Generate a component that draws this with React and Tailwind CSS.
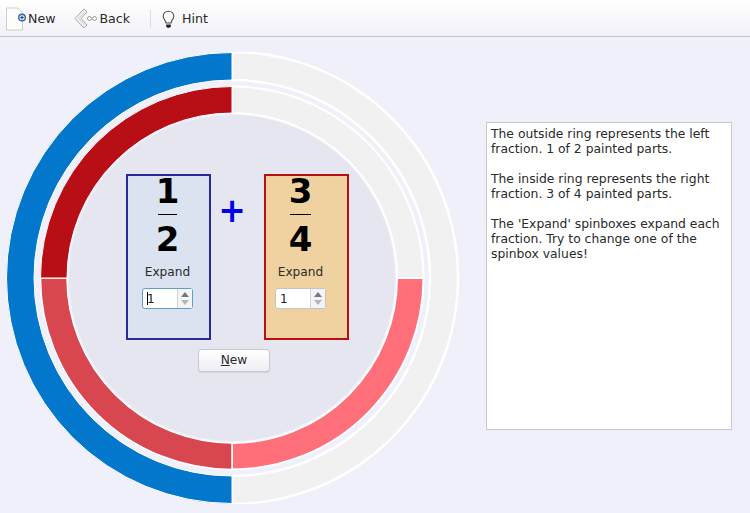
const font = { fontFamily: '"DejaVu Sans", sans-serif' };

function polar(r, deg) {
  const a = ((deg - 90) * Math.PI) / 180;
  return [226 + r * Math.cos(a), 226 + r * Math.sin(a)];
}
function sector(r1, r2, a, b) {
  const [x1, y1] = polar(r2, a);
  const [x2, y2] = polar(r2, b);
  const [x3, y3] = polar(r1, b);
  const [x4, y4] = polar(r1, a);
  const f = b - a > 180 ? 1 : 0;
  return `M${x1} ${y1}A${r2} ${r2} 0 ${f} 1 ${x2} ${y2}L${x3} ${y3}A${r1} ${r1} 0 ${f} 0 ${x4} ${y4}Z`;
}

function Rings() {
  const outer = [
    [0, 180, "#f1f1f1", 2.5, 226],
    [180, 360, "#0277cc", 1, 225.5],
  ];
  const inner = [
    [0, 90, "#f1f1f1", 2],
    [90, 180, "#ff6f7a", 2],
    [180, 270, "#d8464f", 1.5],
    [270, 360, "#b80f17", 1],
  ];
  return (
    <svg width="454" height="452" viewBox="0 0 454 452" className="absolute inset-0">
      {outer.map(([a, b, c, w, r]) => (
        <path key={a} d={sector(198, r, a, b)} fill={c} stroke="#ffffff" strokeWidth={w} />
      ))}
      {inner.map(([a, b, c, w]) => (
        <path key={a} d={sector(165, 191.5, a, b)} fill={c} stroke="#ffffff" strokeWidth={w} />
      ))}
      <circle cx="226" cy="226" r="163" fill="#e6e6f0" />
    </svg>
  );
}

function SpinBox({ focused }) {
  return (
    <div
      className={`flex h-[21px] w-[51px] rounded-[3px] border bg-white ${
        focused ? "border-[#5f9fc9]" : "border-[#c4c4c8]"
      }`}
    >
      <div className="flex flex-1 items-center pl-[4px] text-[12px] text-[#222]">
        {focused && <span className="-mr-[1px] h-[13px] w-[1px] bg-black" />}
        1
      </div>
      <div className="flex w-[15px] flex-col items-center justify-center gap-[3px] border-l border-[#d4d4d8] bg-[#f4f4f6]">
        <svg width="8" height="5" viewBox="0 0 8 5">
          <path d="M4 0L8 5H0Z" fill="#77777f" />
        </svg>
        <svg width="8" height="5" viewBox="0 0 8 5">
          <path d="M4 5L8 0H0Z" fill="#b4b4ba" />
        </svg>
      </div>
    </div>
  );
}

function FractionCard({ top, bottom, box, focused, rule }) {
  return (
    <div className={`flex h-[166px] w-[85px] flex-col items-center border-2 ${box}`}>
      <div className="-mt-[2px] h-[40px] text-[34px] leading-[34px] font-bold text-black">{top}</div>
      <div className={`h-[1px] shrink-0 bg-black ${rule}`} />
      <div className="mt-[2px] h-[40px] text-[34px] leading-[44px] font-bold text-black">{bottom}</div>
      <div className="mt-[8px] text-[12.2px] leading-[15px] text-[#2b2b2b]">Expand</div>
      <div className="mt-[8px]">
        <SpinBox focused={focused} />
      </div>
    </div>
  );
}

function ToolButton({ icon, label, className }) {
  return (
    <div className={`flex items-center text-[12.6px] text-[#2a2a2a] ${className}`}>
      {icon}
      <span>{label}</span>
    </div>
  );
}

export default function App() {
  return (
    <div className="flex h-[513px] w-[750px] flex-col overflow-hidden bg-[#f0f0fa]" style={font}>
      <div className="flex h-[37px] shrink-0 items-center border-b border-[#c4c4cc] bg-gradient-to-b from-[#ffffff] to-[#f1f1f8] pt-[2px]">
        <ToolButton
          className="ml-[6px]"
          label="New"
          icon={
            <svg width="22" height="24" viewBox="0 0 22 24">
              <path d="M0.5 1H12L16.5 5.5V23H0.5Z" fill="#fdfdfb" stroke="#cfcfc4" />
              <circle cx="16" cy="10.5" r="3.3" fill="#e8f0fa" stroke="#2f6aa8" strokeWidth="1.4" />
              <path d="M14.3 10.5H17.7M16 8.8V12.2" stroke="#123f78" strokeWidth="1.1" />
            </svg>
          }
        />
        <ToolButton
          className="ml-[19px]"
          label="Back"
          icon={
            <svg width="25" height="22" viewBox="0 0 25 22">
              <path
                d="M1 10.5L10 1L13 4L7 10.5L13 17L10 20Z"
                fill="#f0f0f0"
                stroke="#a8a8a8"
                strokeWidth="1"
              />
              <path d="M4.5 10.5L10.5 4.5M4.5 10.5L10.5 16.5" stroke="#d0d0d0" fill="none" />
              <circle cx="15.5" cy="10.5" r="2" fill="#fff" stroke="#9a9a9a" />
              <circle cx="20.5" cy="10.5" r="2" fill="#fff" stroke="#9a9a9a" />
            </svg>
          }
        />
        <div className="ml-[20px] h-[18px] w-[1px] bg-[#dcdce2]" />
        <ToolButton
          className="ml-[10px]"
          label="Hint"
          icon={
            <svg width="15" height="19" viewBox="0 0 15 19" className="mr-[6px]">
              <path
                d="M7.5 1.2C4.5 1.2 2.2 3.4 2.2 6.3C2.2 9 4.6 10.2 5 13H10C10.4 10.2 12.8 9 12.8 6.3C12.8 3.4 10.5 1.2 7.5 1.2Z"
                fill="#fafafa"
                stroke="#4a4a4a"
                strokeWidth="1.1"
              />
              <path d="M5.2 14.4H9.8V16.2L8.6 17.8H6.4L5.2 16.2Z" fill="#222" />
            </svg>
          }
        />
      </div>

      <div className="flex flex-1 items-start">
        <div className="relative ml-[6px] mt-[15px] flex h-[452px] w-[452px] shrink-0 flex-col items-center">
          <Rings />
          <div className="relative ml-[10px] mt-[122px] flex w-[223px] items-start justify-between">
            <FractionCard
              top="1"
              bottom="2"
              rule="w-[19px]"
              box="pr-[1px] border-[#2a2a96] bg-[#dae3ef]"
              focused
            />
            <div className="-ml-[10px] mt-[13px] text-[33px] leading-[48px] font-bold text-[#0000e6]">+</div>
            <FractionCard
              top="3"
              bottom="4"
              rule="w-[21px]"
              box="pr-[11px] border-[#b80f0f] bg-[#f0d2a0]"
            />
          </div>
          <button className="relative ml-[4px] mt-[9px] h-[23px] w-[72px] rounded-[3px] border border-[#c8c8d0] bg-gradient-to-b from-[#ffffff] to-[#eeeef4] text-[12.2px] text-[#2a2a2a] shadow-[0_1px_1px_rgba(0,0,0,0.08)]">
            <span className="underline">N</span>ew
          </button>
        </div>
        <div className="ml-[28px] mt-[85px] h-[308px] w-[246px] border border-[#c8c8d0] bg-white px-[4px] py-[4px] text-[12.35px] leading-[15px] text-[#2a2a2a]">
          <p>The outside ring represents the left fraction. 1 of 2 painted parts.</p>
          <p className="mt-[15px]">The inside ring represents the right fraction. 3 of 4 painted parts.</p>
          <p className="mt-[15px]">The 'Expand' spinboxes expand each fraction. Try to change one of the spinbox values!</p>
        </div>
      </div>
    </div>
  );
}
